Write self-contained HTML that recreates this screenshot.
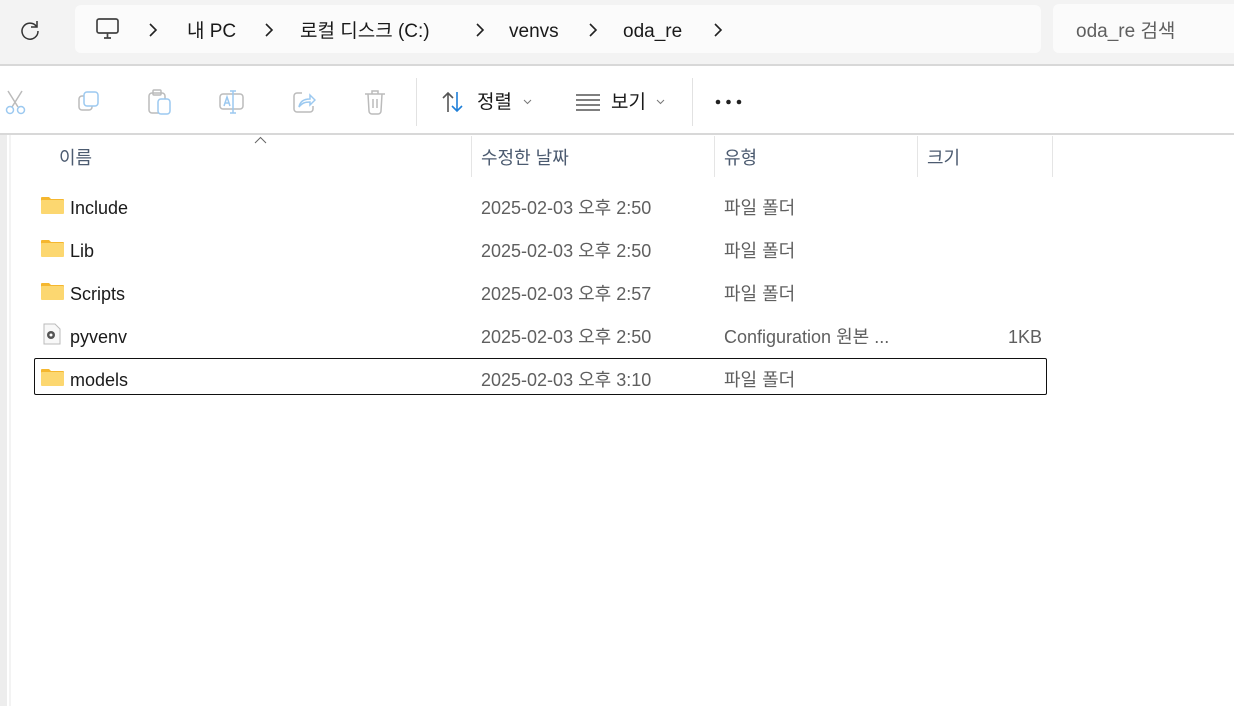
<!DOCTYPE html>
<html><head><meta charset="utf-8"><style>
*{margin:0;padding:0;box-sizing:border-box}
body{width:1234px;height:706px;overflow:hidden;background:#fff;font-family:"Liberation Sans","Noto Sans CJK KR",sans-serif;position:relative;color:#1a1a1a}
.a{position:absolute}
.t{position:absolute;white-space:nowrap;font-size:19px;line-height:26px;height:26px}
.r{font-size:18px}
.g{color:#5f5f5f}
.hd{color:#4c5b70;font-size:18px}
.sep{position:absolute;top:136px;width:1px;height:41px;background:#e5e5e5}
.ch{position:absolute;top:22px}
</style></head><body>
<div class="a" style="left:0;top:0;width:1234px;height:64px;background:#f3f3f3"></div>
<div class="a" style="left:75px;top:5px;width:966px;height:48px;background:#fbfbfb;border-radius:6px"></div>
<div class="a" style="left:1053px;top:4px;width:200px;height:49px;background:#fbfbfb;border-radius:6px"></div>
<div class="a" style="left:0;top:64px;width:1234px;height:2px;background:#d8d8d8"></div>
<div class="a" style="left:0;top:133px;width:1234px;height:2px;background:#d8d8d8"></div>
<div class="a" style="left:0;top:135px;width:7px;height:571px;background:#ededed"></div>
<div class="a" style="left:9px;top:135px;width:2px;height:571px;background:#f3f3f3"></div>

<svg class="a" style="left:19px;top:19px" width="22" height="22" viewBox="0 0 22 22" fill="none" stroke="#333" stroke-width="1.5"><path d="M17.5 7.5A8 8 0 1 0 19 12"/><path d="M18 2v6h-6"/></svg>
<svg class="a" style="left:95px;top:17px" width="26" height="24" viewBox="0 0 26 24" fill="none" stroke="#444" stroke-width="1.7"><rect x="2" y="2" width="21" height="14" rx="2"/><path d="M9 21h7M12.5 16v5"/></svg>
<svg class="ch" style="left:148px" width="10" height="16" viewBox="0 0 10 16" fill="none" stroke="#222" stroke-width="1.6"><path d="M2 2l6 6-6 6"/></svg>
<div class="t" style="left:187px;top:19px">내 PC</div>
<svg class="ch" style="left:264px" width="10" height="16" viewBox="0 0 10 16" fill="none" stroke="#222" stroke-width="1.6"><path d="M2 2l6 6-6 6"/></svg>
<div class="t" style="left:300px;top:19px">로컬 디스크 (C:)</div>
<svg class="ch" style="left:475px" width="10" height="16" viewBox="0 0 10 16" fill="none" stroke="#222" stroke-width="1.6"><path d="M2 2l6 6-6 6"/></svg>
<div class="t" style="left:509px;top:19px">venvs</div>
<svg class="ch" style="left:588px" width="10" height="16" viewBox="0 0 10 16" fill="none" stroke="#222" stroke-width="1.6"><path d="M2 2l6 6-6 6"/></svg>
<div class="t" style="left:623px;top:19px">oda_re</div>
<svg class="ch" style="left:713px" width="10" height="16" viewBox="0 0 10 16" fill="none" stroke="#222" stroke-width="1.6"><path d="M2 2l6 6-6 6"/></svg>
<div class="t g" style="left:1076px;top:19px">oda_re 검색</div>

<svg class="a" style="left:4px;top:89px" width="24" height="26" viewBox="0 0 24 26" fill="none" stroke="#9cc9f0" stroke-width="1.5"><path d="M4 2l10 16M18 2L8 18" stroke="#bbb"/><circle cx="6" cy="21" r="3.5"/><circle cx="17" cy="21" r="3.5"/></svg>
<svg class="a" style="left:77px;top:90px" width="24" height="24" viewBox="0 0 24 24" fill="none" stroke-width="1.5"><rect x="2" y="6" width="13" height="14" rx="3" stroke="#bbb"/><rect x="7" y="2" width="14" height="14" rx="3" stroke="#9cc9f0" fill="#fff"/></svg>
<svg class="a" style="left:148px;top:89px" width="24" height="26" viewBox="0 0 24 26" fill="none" stroke-width="1.5"><rect x="1" y="4" width="16" height="20" rx="3" stroke="#bbb"/><rect x="5" y="1" width="8" height="5" rx="1" stroke="#bbb"/><rect x="10" y="10" width="12" height="15" rx="3" stroke="#9cc9f0" fill="#fff"/></svg>
<svg class="a" style="left:219px;top:89px" width="26" height="26" viewBox="0 0 26 26" fill="none" stroke-width="1.5"><rect x="1" y="5" width="23" height="15" rx="3" stroke="#bbb"/><path d="M14 2v22M11 2h6M11 24h6" stroke="#9cc9f0"/><path d="M5 17l3-9 3 9M6 14h4" stroke="#9cc9f0"/></svg>
<svg class="a" style="left:292px;top:90px" width="24" height="24" viewBox="0 0 24 24" fill="none" stroke-width="1.5"><path d="M10 3H5a3 3 0 0 0-3 3v13a3 3 0 0 0 3 3h13a3 3 0 0 0 3-3v-3" stroke="#bbb"/><path d="M7 17c1-6 5-8 11-8V5l5 5-5 5v-3c-5 0-8 1-11 5z" stroke="#9cc9f0"/></svg>
<svg class="a" style="left:364px;top:89px" width="22" height="26" viewBox="0 0 22 26" fill="none" stroke="#bbb" stroke-width="1.5"><path d="M1 5h20M8 5V2h6v3M4 5l1 17a3 3 0 0 0 3 3h6a3 3 0 0 0 3-3l1-17M9 10v9M13 10v9"/></svg>
<div class="a" style="left:416px;top:78px;width:1px;height:48px;background:#e2e2e2"></div>
<svg class="a" style="left:441px;top:91px" width="24" height="22" viewBox="0 0 24 22" fill="none" stroke-width="1.6"><path d="M7 21V2M2 7l5-5 5 5" stroke="#555"/><path d="M16 1v19M11 15l5 5 5-5" stroke="#1f7fd8"/></svg>
<div class="t" style="left:477px;top:90px">정렬</div>
<svg class="a" style="left:523px;top:99px" width="9" height="6" viewBox="0 0 9 6" fill="none" stroke="#777"><path d="M1 1l3.5 3.5L8 1"/></svg>
<svg class="a" style="left:575px;top:93px" width="26" height="18" viewBox="0 0 26 18" stroke="#555" stroke-width="1.4"><path d="M1 2h24M1 7h24M1 12h24M1 17h24"/></svg>
<div class="t" style="left:611px;top:90px">보기</div>
<svg class="a" style="left:656px;top:99px" width="9" height="6" viewBox="0 0 9 6" fill="none" stroke="#777"><path d="M1 1l3.5 3.5L8 1"/></svg>
<div class="a" style="left:692px;top:78px;width:1px;height:48px;background:#e2e2e2"></div>
<svg class="a" style="left:715px;top:99px" width="28" height="6"><circle cx="3" cy="3" r="2.3" fill="#222"/><circle cx="13.5" cy="3" r="2.3" fill="#222"/><circle cx="24" cy="3" r="2.3" fill="#222"/></svg>

<svg class="a" style="left:254px;top:136px" width="13" height="8" viewBox="0 0 13 8" fill="none" stroke="#666"><path d="M1 7l5.5-5.5L12 7"/></svg>
<div class="t hd" style="left:59px;top:145px">이름</div>
<div class="sep" style="left:471px"></div>
<div class="t hd" style="left:481px;top:145px">수정한 날짜</div>
<div class="sep" style="left:714px"></div>
<div class="t hd" style="left:724px;top:145px">유형</div>
<div class="sep" style="left:917px"></div>
<div class="t hd" style="left:927px;top:145px">크기</div>
<div class="sep" style="left:1052px"></div>

<div class="a" style="left:34px;top:358px;width:1013px;height:37px;border:1px solid #111;border-radius:2px"></div>

<svg class="a" style="left:41px;top:196px" width="23" height="18" viewBox="0 0 23 18"><path d="M0 2a1 1 0 0 1 1-1h7l2 2h12a1 1 0 0 1 1 1v13H0z" fill="#f5b72f"/><rect x="0" y="4" width="23" height="14" rx="1" fill="#fcd770"/></svg>
<svg class="a" style="left:41px;top:239px" width="23" height="18" viewBox="0 0 23 18"><path d="M0 2a1 1 0 0 1 1-1h7l2 2h12a1 1 0 0 1 1 1v13H0z" fill="#f5b72f"/><rect x="0" y="4" width="23" height="14" rx="1" fill="#fcd770"/></svg>
<svg class="a" style="left:41px;top:282px" width="23" height="18" viewBox="0 0 23 18"><path d="M0 2a1 1 0 0 1 1-1h7l2 2h12a1 1 0 0 1 1 1v13H0z" fill="#f5b72f"/><rect x="0" y="4" width="23" height="14" rx="1" fill="#fcd770"/></svg>
<svg class="a" style="left:43px;top:323px" width="18" height="22" viewBox="0 0 18 22"><path d="M1 1h11l5 5v15H1z" fill="#f8f8f8" stroke="#bbb"/><circle cx="8" cy="12" r="4" fill="#555"/><circle cx="8" cy="12" r="1.5" fill="#fff"/></svg>
<svg class="a" style="left:41px;top:368px" width="23" height="18" viewBox="0 0 23 18"><path d="M0 2a1 1 0 0 1 1-1h7l2 2h12a1 1 0 0 1 1 1v13H0z" fill="#f5b72f"/><rect x="0" y="4" width="23" height="14" rx="1" fill="#fcd770"/></svg>

<div class="t r" style="left:70px;top:195px">Include</div>
<div class="t r" style="left:70px;top:238px">Lib</div>
<div class="t r" style="left:70px;top:281px">Scripts</div>
<div class="t r" style="left:70px;top:324px">pyvenv</div>
<div class="t r" style="left:70px;top:367px">models</div>

<div class="t r g" style="left:481px;top:195px">2025-02-03 오후 2:50</div>
<div class="t r g" style="left:481px;top:238px">2025-02-03 오후 2:50</div>
<div class="t r g" style="left:481px;top:281px">2025-02-03 오후 2:57</div>
<div class="t r g" style="left:481px;top:324px">2025-02-03 오후 2:50</div>
<div class="t r g" style="left:481px;top:367px">2025-02-03 오후 3:10</div>

<div class="t r g" style="left:724px;top:195px">파일 폴더</div>
<div class="t r g" style="left:724px;top:238px">파일 폴더</div>
<div class="t r g" style="left:724px;top:281px">파일 폴더</div>
<div class="t r g" style="left:724px;top:324px">Configuration 원본 ...</div>
<div class="t r g" style="left:724px;top:367px">파일 폴더</div>
<div class="t r g" style="left:1008px;top:324px">1KB</div>
</body></html>
